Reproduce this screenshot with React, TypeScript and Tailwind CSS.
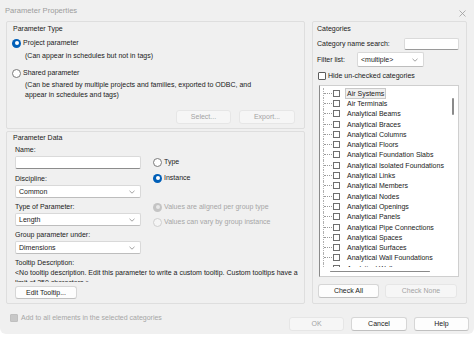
import React from 'react';

const categories = [
    'Air Systems',
    'Air Terminals',
    'Analytical Beams',
    'Analytical Braces',
    'Analytical Columns',
    'Analytical Floors',
    'Analytical Foundation Slabs',
    'Analytical Isolated Foundations',
    'Analytical Links',
    'Analytical Members',
    'Analytical Nodes',
    'Analytical Openings',
    'Analytical Panels',
    'Analytical Pipe Connections',
    'Analytical Spaces',
    'Analytical Surfaces',
    'Analytical Wall Foundations',
    'Analytical Walls',
];

function Radio({ checked, disabled }: { checked?: boolean; disabled?: boolean }) {
    if (checked) {
        return (
            <span className={`w-[9px] h-[9px] rounded-full flex items-center justify-center shrink-0 ${disabled ? 'bg-[#c4c4c4]' : 'bg-[#005fb8]'}`}>
                <span className={`w-[4px] h-[4px] rounded-full ${disabled ? 'bg-[#e8e8e8]' : 'bg-white'}`}></span>
            </span>
        );
    }
    return (
        <span className={`w-[9px] h-[9px] rounded-full border shrink-0 ${disabled ? 'border-[#cfcfcf] bg-[#f5f5f5]' : 'border-[#7a7a7a] bg-white'}`}></span>
    );
}

function Chevron() {
    return (
        <svg className="w-[6px] h-[4px] text-[#8a8a8a]" viewBox="0 0 6 4" fill="none" stroke="currentColor" strokeWidth={0.8}>
            <path d="M0.5 0.8 L3 3.2 L5.5 0.8" />
        </svg>
    );
}

function Select({ value, className = '' }: { value: string; className?: string }) {
    return (
        <div className={`flex items-center justify-between bg-white border border-[#d9d9d9] border-b-[#bdbdbd] rounded-[2px] pl-[3px] pr-[5px] ${className}`}>
            <span>{value}</span>
            <Chevron />
        </div>
    );
}

function Button({ label, disabled, className = '' }: { label: string; disabled?: boolean; className?: string }) {
    return (
        <div
            className={`flex items-center justify-center rounded-[3px] border ${
                disabled
                    ? 'bg-[#f6f6f6] border-[#e6e6e6] text-[#a3a3a3]'
                    : 'bg-[#fdfdfd] border-[#d6d6d6] border-b-[#c0c0c0] text-[#1a1a1a]'
            } ${className}`}
        >
            {label}
        </div>
    );
}

export default function App() {
    return (
        <div className="w-[474px] h-[338px] bg-white overflow-hidden font-['Liberation_Sans',Arial,sans-serif] text-[7px] leading-[10px] text-[#1a1a1a] whitespace-nowrap">
            <div className="h-[334px] bg-[#f0f0f0] rounded-b-[6px] flex flex-col">
                {/* Title bar */}
                <div className="h-[21px] flex items-center justify-between pl-[5px] pr-[8px] text-[#9c9c9c] text-[7.6px]">
                    <span>Parameter Properties</span>
                    <svg className="w-[7px] h-[7px] mt-[5px]" viewBox="0 0 7 7" stroke="#9c9c9c" strokeWidth={0.8}>
                        <path d="M0.5 0.5 L6.5 6.5 M6.5 0.5 L0.5 6.5" />
                    </svg>
                </div>

                {/* Body */}
                <div className="flex gap-[7px] pl-[6px]">
                    {/* Left column */}
                    <div className="w-[299px] flex flex-col gap-[2px]">
                        {/* Parameter Type */}
                        <div className="h-[108px] border border-[#dedede] rounded-[2px] pl-[6px] pr-[9px] pt-[2px] flex flex-col">
                            <span>Parameter Type</span>
                            <div className="flex items-center gap-[2px] mt-[4px] -ml-[1px]">
                                <Radio checked />
                                <span>Project parameter</span>
                            </div>
                            <span className="ml-[12px] mt-[3px]">(Can appear in schedules but not in tags)</span>
                            <div className="flex items-center gap-[2px] mt-[7px] -ml-[1px]">
                                <Radio />
                                <span>Shared parameter</span>
                            </div>
                            <span className="ml-[12px] mt-[2px]">(Can be shared by multiple projects and families, exported to ODBC, and</span>
                            <span className="ml-[12px]">appear in schedules and tags)</span>
                            <div className="flex justify-end gap-[8px] mt-[10px]">
                                <Button label="Select..." disabled className="w-[55px] h-[14px]" />
                                <Button label="Export..." disabled className="w-[56px] h-[14px]" />
                            </div>
                        </div>

                        {/* Parameter Data */}
                        <div className="h-[173px] border border-[#dedede] rounded-[2px] pl-[6px] pr-[6px] pt-[1px] flex flex-col">
                            <span>Parameter Data</span>
                            <div className="flex">
                                <div className="w-[126px] flex flex-col ml-[2px] pt-[2px]">
                                    <span>Name:</span>
                                    <div className="h-[13px] mt-[1px] bg-white border border-[#dadada] border-b-[#8c8c8c] rounded-[2px]"></div>
                                    <span className="mt-[5px]">Discipline:</span>
                                    <Select value="Common" className="h-[13px] mt-[1px]" />
                                    <span className="mt-[4px]">Type of Parameter:</span>
                                    <Select value="Length" className="h-[13px] mt-[1px]" />
                                    <span className="mt-[4px]">Group parameter under:</span>
                                    <Select value="Dimensions" className="h-[13px] mt-[1px]" />
                                </div>
                                <div className="flex flex-col ml-[12px] pt-[14px]">
                                    <div className="flex items-center gap-[2px]">
                                        <Radio />
                                        <span>Type</span>
                                    </div>
                                    <div className="flex items-center gap-[2px] mt-[6px]">
                                        <Radio checked />
                                        <span>Instance</span>
                                    </div>
                                    <div className="flex items-center gap-[2px] mt-[19px] text-[#a6a6a6]">
                                        <Radio checked disabled />
                                        <span>Values are aligned per group type</span>
                                    </div>
                                    <div className="flex items-center gap-[2px] mt-[5px] text-[#a6a6a6]">
                                        <Radio disabled />
                                        <span>Values can vary by group instance</span>
                                    </div>
                                </div>
                            </div>
                            <span className="ml-[2px] mt-[4px]">Tooltip Description:</span>
                            <div className="ml-[2px] h-[14px] overflow-hidden whitespace-normal">
                                &lt;No tooltip description. Edit this parameter to write a custom tooltip. Custom tooltips have a limit of 250 characters.&gt;
                            </div>
                            <Button label="Edit Tooltip..." className="w-[62px] h-[13px] ml-[2px] mt-[4px]" />
                        </div>
                    </div>

                    {/* Categories */}
                    <div className="w-[155px] h-[283px] border border-[#dedede] rounded-[2px] pl-[4px] pr-[7px] pt-[2px] flex flex-col">
                        <span>Categories</span>
                        <div className="flex items-center justify-between h-[13px] mt-[3px]">
                            <span>Category name search:</span>
                            <div className="w-[55px] h-[12px] bg-white border border-[#dadada] border-b-[#9a9a9a] rounded-[2px]"></div>
                        </div>
                        <div className="flex items-center h-[15px] mt-[2px]">
                            <span className="w-[40px]">Filter list:</span>
                            <Select value="<multiple>" className="w-[67px] h-[15px]" />
                        </div>
                        <div className="flex items-center gap-[2px] mt-[4px] ml-[1px]">
                            <span className="w-[8px] h-[8px] border border-[#5c5c5c] rounded-[1px] bg-white"></span>
                            <span>Hide un-checked categories</span>
                        </div>
                        {/* List */}
                        <div className="h-[192px] mt-[4px] ml-[2px] bg-white border border-[#cfcfcf] border-l-[#8a8a8a] flex">
                            <div className="flex-1 min-w-0 flex flex-col">
                                <div className="h-[181px] overflow-hidden pt-[2px] pl-[3px] flex flex-col">
                                    {categories.map((c, i) => (
                                        <div key={c} className="h-[10.3px] shrink-0 flex items-center">
                                            <span className="w-[9px] h-full border-l border-dotted border-[#b0b0b0] flex items-center">
                                                <span className="w-[8px] border-t border-dotted border-[#9a9a9a]"></span>
                                            </span>
                                            <span className="w-[7px] h-[7px] border border-[#6e6e6e] bg-white ml-[1px] shrink-0"></span>
                                            <span className={`ml-[6px] px-[1px] leading-[9px] ${i === 0 ? 'bg-[#f0f0f0] outline outline-[0.5px] outline-[#c8c8c8]' : ''}`}>{c}</span>
                                        </div>
                                    ))}
                                </div>
                                <div className="flex-1 flex items-center pl-[10px]">
                                    <div className="w-[100px] h-[1.5px] bg-[#8a8a8a] rounded-full"></div>
                                </div>
                            </div>
                            <div className="w-[10px] flex justify-center pt-[12px]">
                                <div className="w-[1.5px] h-[17px] bg-[#8a8a8a] rounded-full"></div>
                            </div>
                        </div>
                        <div className="flex gap-[6px] mt-[7px] ml-[1px]">
                            <Button label="Check All" className="w-[61px] h-[14px]" />
                            <Button label="Check None" disabled className="w-[72px] h-[14px]" />
                        </div>
                    </div>
                </div>

                {/* Footer */}
                <div className="flex items-start justify-between h-[29px] pl-[10px] pr-[5px]">
                    <div className="flex items-center gap-[3px] mt-[9px] text-[#a6a6a6]">
                        <span className="w-[8px] h-[8px] rounded-[1px] bg-[#c8c8c8] border border-[#c0c0c0]"></span>
                        <span>Add to all elements in the selected categories</span>
                    </div>
                    <div className="flex gap-[7px] mt-[13px]">
                        <Button label="OK" disabled className="w-[55px] h-[14px]" />
                        <Button label="Cancel" className="w-[56px] h-[14px]" />
                        <Button label="Help" className="w-[55px] h-[14px]" />
                    </div>
                </div>
            </div>
        </div>
    );
}
